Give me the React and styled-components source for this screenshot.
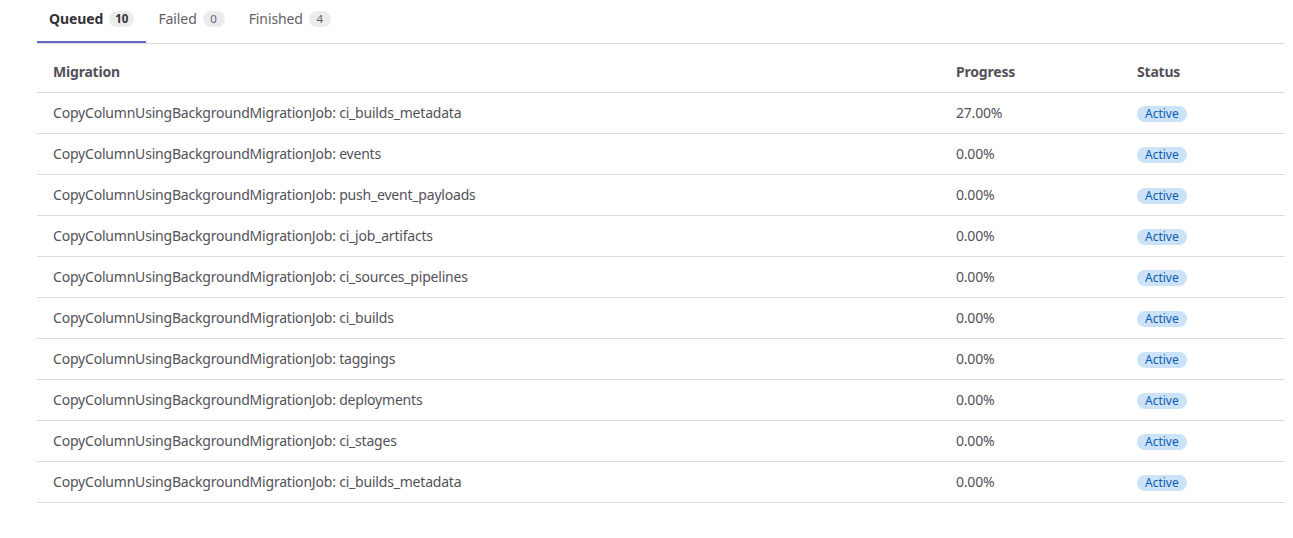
import React from "react";
import styled, { createGlobalStyle } from "styled-components";

const GlobalStyle = createGlobalStyle`
  body {
    margin: 0;
    background: #fff;
    font-family: "Noto Sans", "Open Sans", sans-serif;
    color: #525252;
  }
`;

const rows = [
  { table: "ci_builds_metadata", progress: "27.00%" },
  { table: "events", progress: "0.00%" },
  { table: "push_event_payloads", progress: "0.00%" },
  { table: "ci_job_artifacts", progress: "0.00%" },
  { table: "ci_sources_pipelines", progress: "0.00%" },
  { table: "ci_builds", progress: "0.00%" },
  { table: "taggings", progress: "0.00%" },
  { table: "deployments", progress: "0.00%" },
  { table: "ci_stages", progress: "0.00%" },
  { table: "ci_builds_metadata", progress: "0.00%" },
];

const tabs = [
  { label: "Queued", count: 10, active: true },
  { label: "Failed", count: 0 },
  { label: "Finished", count: 4 },
];

const Page = styled.div`
  width: 1248px;
  margin-left: 37px;
`;

const TabBar = styled.ul`
  display: flex;
  margin: 0;
  padding: 0;
  list-style: none;
  border-bottom: 1px solid #dcdcde;
`;

const Tab = styled.li`
  display: flex;
  align-items: center;
  gap: 6px;
  height: 43px;
  padding: 0 12px 6px 12px;
  box-sizing: border-box;
  font-size: 14px;
  letter-spacing: -0.1px;
  color: ${({ $active }) => ($active ? "#333238" : "#626168")};
  font-weight: ${({ $active }) => ($active ? 700 : 400)};
  box-shadow: ${({ $active }) => ($active ? "inset 0 -2px 0 #6666c4" : "none")};
`;

const Count = styled.span`
  display: inline-flex;
  align-items: center;
  justify-content: center;
  min-width: 22px;
  height: 16px;
  padding: 0 6px;
  box-sizing: border-box;
  border-radius: 8px;
  background: #ececef;
  font-size: 11.5px;
  letter-spacing: 0;
  font-weight: ${({ $active }) => ($active ? 700 : 400)};
  color: ${({ $active }) => ($active ? "#333238" : "#626168")};
`;

const Table = styled.table`
  width: 100%;
  border-collapse: collapse;
  font-size: 14px;
  letter-spacing: -0.2px;
`;

const Th = styled.th`
  text-align: left;
  font-weight: 700;
  color: #535158;
  height: 48px;
  padding: 8px 16px 0 16px;
  border-bottom: 1px solid #dcdcde;
  width: ${({ $w }) => $w || "auto"};
  box-sizing: border-box;
`;

const Td = styled.td`
  height: 40px;
  padding: 0 16px;
  border-bottom: 1px solid #dcdcde;
  color: #535158;
`;

const Badge = styled.span`
  display: inline-block;
  padding: 0 8px;
  height: 16px;
  line-height: 16px;
  border-radius: 8px;
  background: #cbe2f9;
  color: #0b5cad;
  font-size: 12px;
  letter-spacing: 0;
`;

export default function App() {
  return (
    <>
      <GlobalStyle />
      <Page>
        <TabBar>
          {tabs.map((t) => (
            <Tab key={t.label} $active={t.active}>
              {t.label}
              <Count $active={t.active}>{t.count}</Count>
            </Tab>
          ))}
        </TabBar>
        <Table>
          <thead>
            <tr>
              <Th>Migration</Th>
              <Th $w="181px">Progress</Th>
              <Th $w="164px">Status</Th>
            </tr>
          </thead>
          <tbody>
            {rows.map((r, i) => (
              <tr key={i}>
                <Td>CopyColumnUsingBackgroundMigrationJob: {r.table}</Td>
                <Td>{r.progress}</Td>
                <Td>
                  <Badge>Active</Badge>
                </Td>
              </tr>
            ))}
          </tbody>
        </Table>
      </Page>
    </>
  );
}
